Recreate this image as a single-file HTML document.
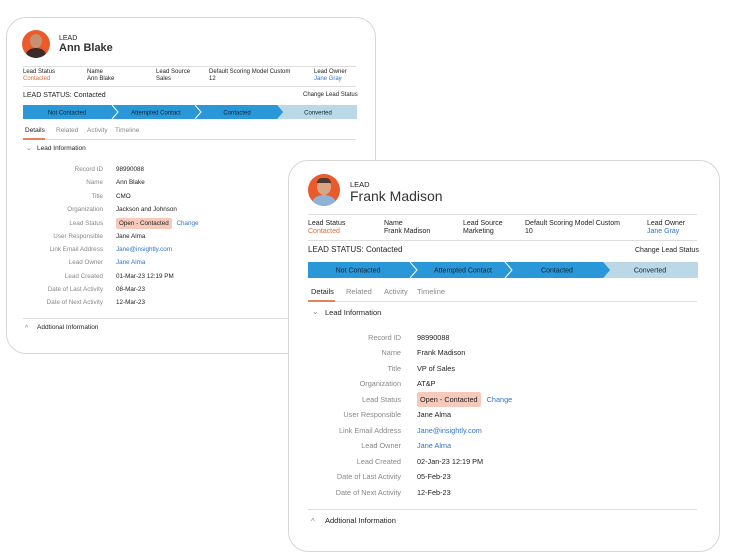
<!DOCTYPE html>
<html><head><meta charset="utf-8"><style>
*{margin:0;padding:0;box-sizing:border-box}
body{width:730px;height:557px;background:#fff;position:relative;overflow:hidden;font-family:"Liberation Sans",sans-serif;color:#222}
.card{position:absolute;background:#fff;border:1.5px solid #d6d6d6;border-radius:20px}
.t{position:absolute;white-space:nowrap;line-height:1}
.hr{position:absolute;height:1px;background:#ddd}
.g{color:#888}.o{color:#e06b3a}.b{color:#2f74c8}
.r{text-align:right}
.pill{background:#f6c9bb;padding:2px 3px;border-radius:2px}
.av{position:absolute;border-radius:50%;background:#ea5a2b;overflow:hidden}
</style></head><body>

<!-- card 1 -->
<div class="card" style="left:6px;top:17px;width:370px;height:337px"></div>
<div class="av" style="left:22px;top:30px;width:28px;height:28px"><div style="position:absolute;left:8px;top:4px;width:12px;height:14px;border-radius:50%;background:#c8906f"></div><div style="position:absolute;left:4px;top:18px;width:20px;height:14px;border-radius:50%;background:#3a2a2a"></div></div>
<div class="t" style="left:59px;top:35px;font-size:7px">LEAD</div>
<div class="t" style="left:59px;top:43px;font-size:11px;font-weight:bold;color:#333">Ann Blake</div>
<div class="hr" style="left:23px;top:66px;width:333px"></div>
<div style="font-size:6px">
<div class="t" style="left:23px;top:69px">Lead Status</div><div class="t o" style="left:23px;top:76px">Contacted</div>
<div class="t" style="left:87px;top:69px">Name</div><div class="t" style="left:87px;top:76px">Ann Blake</div>
<div class="t" style="left:156px;top:69px">Lead Source</div><div class="t" style="left:156px;top:76px">Sales</div>
<div class="t" style="left:209px;top:69px">Default Scoring Model Custom</div><div class="t" style="left:209px;top:76px">12</div>
<div class="t" style="left:314px;top:69px">Lead Owner</div><div class="t b" style="left:314px;top:76px">Jane Gray</div>
</div>
<div class="hr" style="left:23px;top:86px;width:333px"></div>
<div class="t" style="left:23px;top:92px;font-size:7px">LEAD STATUS: Contacted</div>
<div class="t" style="left:303px;top:92px;font-size:6px">Change Lead Status</div>
<svg style="position:absolute;left:23px;top:105px" width="334" height="14">
<rect x="0" y="0" width="334" height="14" fill="#2a98d8"/>
<polygon points="254,0 334,0 334,14 254,14 260,7" fill="#bad8e5"/>
<polyline points="89,0 95,7 89,14" fill="none" stroke="#fff" stroke-width="1"/>
<polyline points="172,0 178,7 172,14" fill="none" stroke="#fff" stroke-width="1"/>
<polygon points="254,0 260,7 254,14" fill="#2a98d8"/>
<text x="44" y="9.5" font-size="6" fill="#123" text-anchor="middle" font-family="Liberation Sans">Not Contacted</text>
<text x="133" y="9.5" font-size="6" fill="#123" text-anchor="middle" font-family="Liberation Sans">Attempted Contact</text>
<text x="214" y="9.5" font-size="6" fill="#123" text-anchor="middle" font-family="Liberation Sans">Contacted</text>
<text x="295" y="9.5" font-size="6" fill="#123" text-anchor="middle" font-family="Liberation Sans">Converted</text>
</svg>
<div class="t" style="left:25px;top:128px;font-size:6.5px">Details</div>
<div class="t g" style="left:56px;top:128px;font-size:6.5px">Related</div>
<div class="t g" style="left:87px;top:128px;font-size:6.5px">Activity</div>
<div class="t g" style="left:115px;top:128px;font-size:6.5px">Timeline</div>
<div class="hr" style="left:23px;top:139px;width:333px"></div>
<div style="position:absolute;left:23px;top:138px;width:22px;height:2px;background:#e8805a"></div>
<div class="t g" style="left:26px;top:145px;font-size:7px">⌄</div>
<div class="t" style="left:37px;top:146px;font-size:6.5px">Lead Information</div>
<div style="font-size:6.3px">
<div class="t g r" style="left:0;width:103px;top:167px">Record ID</div><div class="t" style="left:116px;top:167px">98990088</div>
<div class="t g r" style="left:0;width:103px;top:180px">Name</div><div class="t" style="left:116px;top:180px">Ann Blake</div>
<div class="t g r" style="left:0;width:103px;top:194px">Title</div><div class="t" style="left:116px;top:194px">CMO</div>
<div class="t g r" style="left:0;width:103px;top:207px">Organization</div><div class="t" style="left:116px;top:207px">Jackson and Johnson</div>
<div class="t g r" style="left:0;width:103px;top:221px">Lead Status</div><div class="t" style="left:116px;top:221px"><span class="pill">Open - Contacted</span> <span class="b" style="margin-left:3px">Change</span></div>
<div class="t g r" style="left:0;width:103px;top:234px">User Responsible</div><div class="t" style="left:116px;top:234px">Jane Alma</div>
<div class="t g r" style="left:0;width:103px;top:247px">Link Email Address</div><div class="t b" style="left:116px;top:247px">Jane@insightly.com</div>
<div class="t g r" style="left:0;width:103px;top:260px">Lead Owner</div><div class="t b" style="left:116px;top:260px">Jane Alma</div>
<div class="t g r" style="left:0;width:103px;top:274px">Lead Created</div><div class="t" style="left:116px;top:274px">01-Mar-23 12:19 PM</div>
<div class="t g r" style="left:0;width:103px;top:287px">Date of Last Activity</div><div class="t" style="left:116px;top:287px">08-Mar-23</div>
<div class="t g r" style="left:0;width:103px;top:300px">Date of Next Activity</div><div class="t" style="left:116px;top:300px">12-Mar-23</div>
</div>
<div class="hr" style="left:23px;top:318px;width:333px"></div>
<div class="t g" style="left:25px;top:325px;font-size:7px">^</div>
<div class="t" style="left:37px;top:325px;font-size:6.5px">Addtional Information</div>

<!-- card 2 -->
<div class="card" style="left:288px;top:160px;width:432px;height:392px"></div>
<div class="av" style="left:308px;top:174px;width:32px;height:32px"><div style="position:absolute;left:9px;top:5px;width:14px;height:16px;border-radius:50%;background:#d9a585"></div><div style="position:absolute;left:9px;top:4px;width:14px;height:5px;border-radius:5px 5px 0 0;background:#4a3a33"></div><div style="position:absolute;left:4px;top:21px;width:24px;height:16px;border-radius:50%;background:#8fb3d6"></div></div>
<div class="t" style="left:350px;top:181px;font-size:7.5px">LEAD</div>
<div class="t" style="left:350px;top:189px;font-size:14px;color:#333">Frank Madison</div>
<div class="hr" style="left:308px;top:214px;width:389px"></div>
<div style="font-size:7px">
<div class="t" style="left:308px;top:220px">Lead Status</div><div class="t o" style="left:308px;top:228px">Contacted</div>
<div class="t" style="left:384px;top:220px">Name</div><div class="t" style="left:384px;top:228px">Frank Madison</div>
<div class="t" style="left:463px;top:220px">Lead Source</div><div class="t" style="left:463px;top:228px">Marketing</div>
<div class="t" style="left:525px;top:220px">Default Scoring Model Custom</div><div class="t" style="left:525px;top:228px">10</div>
<div class="t" style="left:647px;top:220px">Lead Owner</div><div class="t b" style="left:647px;top:228px">Jane Gray</div>
</div>
<div class="hr" style="left:308px;top:240px;width:389px"></div>
<div class="t" style="left:308px;top:246px;font-size:8px">LEAD STATUS: Contacted</div>
<div class="t" style="left:635px;top:247px;font-size:7px">Change Lead Status</div>
<svg style="position:absolute;left:308px;top:262px" width="390" height="16">
<rect x="0" y="0" width="390" height="16" fill="#2a98d8"/>
<polygon points="295,0 390,0 390,16 295,16 302,8" fill="#bad8e5"/>
<polyline points="102,0 109,8 102,16" fill="none" stroke="#fff" stroke-width="1"/>
<polyline points="197,0 204,8 197,16" fill="none" stroke="#fff" stroke-width="1"/>
<polygon points="295,0 302,8 295,16" fill="#2a98d8"/>
<text x="50" y="10.5" font-size="7" fill="#123" text-anchor="middle" font-family="Liberation Sans">Not Contacted</text>
<text x="155" y="10.5" font-size="7" fill="#123" text-anchor="middle" font-family="Liberation Sans">Attempted Contact</text>
<text x="249" y="10.5" font-size="7" fill="#123" text-anchor="middle" font-family="Liberation Sans">Contacted</text>
<text x="342" y="10.5" font-size="7" fill="#123" text-anchor="middle" font-family="Liberation Sans">Converted</text>
</svg>
<div class="t" style="left:311px;top:288px;font-size:7.5px">Details</div>
<div class="t g" style="left:346px;top:288px;font-size:7.5px">Related</div>
<div class="t g" style="left:384px;top:288px;font-size:7.5px">Activity</div>
<div class="t g" style="left:417px;top:288px;font-size:7.5px">Timeline</div>
<div class="hr" style="left:308px;top:301px;width:389px"></div>
<div style="position:absolute;left:308px;top:300px;width:27px;height:2px;background:#e8805a"></div>
<div class="t g" style="left:312px;top:308px;font-size:8px">⌄</div>
<div class="t" style="left:325px;top:309px;font-size:7.5px">Lead Information</div>
<div style="font-size:7.3px">
<div class="t g r" style="left:300px;width:101px;top:334px">Record ID</div><div class="t" style="left:417px;top:334px">98990088</div>
<div class="t g r" style="left:300px;width:101px;top:349px">Name</div><div class="t" style="left:417px;top:349px">Frank Madison</div>
<div class="t g r" style="left:300px;width:101px;top:365px">Title</div><div class="t" style="left:417px;top:365px">VP of Sales</div>
<div class="t g r" style="left:300px;width:101px;top:380px">Organization</div><div class="t" style="left:417px;top:380px">AT&amp;P</div>
<div class="t g r" style="left:300px;width:101px;top:396px">Lead Status</div><div class="t" style="left:417px;top:396px"><span class="pill" style="padding:3px 3px">Open - Contacted</span> <span class="b" style="margin-left:4px">Change</span></div>
<div class="t g r" style="left:300px;width:101px;top:411px">User Responsible</div><div class="t" style="left:417px;top:411px">Jane Alma</div>
<div class="t g r" style="left:300px;width:101px;top:427px">Link Email Address</div><div class="t b" style="left:417px;top:427px">Jane@insightly.com</div>
<div class="t g r" style="left:300px;width:101px;top:442px">Lead Owner</div><div class="t b" style="left:417px;top:442px">Jane Alma</div>
<div class="t g r" style="left:300px;width:101px;top:458px">Lead Created</div><div class="t" style="left:417px;top:458px">02-Jan-23 12:19 PM</div>
<div class="t g r" style="left:300px;width:101px;top:473px">Date of Last Activity</div><div class="t" style="left:417px;top:473px">05-Feb-23</div>
<div class="t g r" style="left:300px;width:101px;top:489px">Date of Next Activity</div><div class="t" style="left:417px;top:489px">12-Feb-23</div>
</div>
<div class="hr" style="left:308px;top:509px;width:389px"></div>
<div class="t g" style="left:311px;top:518px;font-size:8px">^</div>
<div class="t" style="left:325px;top:517px;font-size:7.5px">Addtional Information</div>
</body></html>
